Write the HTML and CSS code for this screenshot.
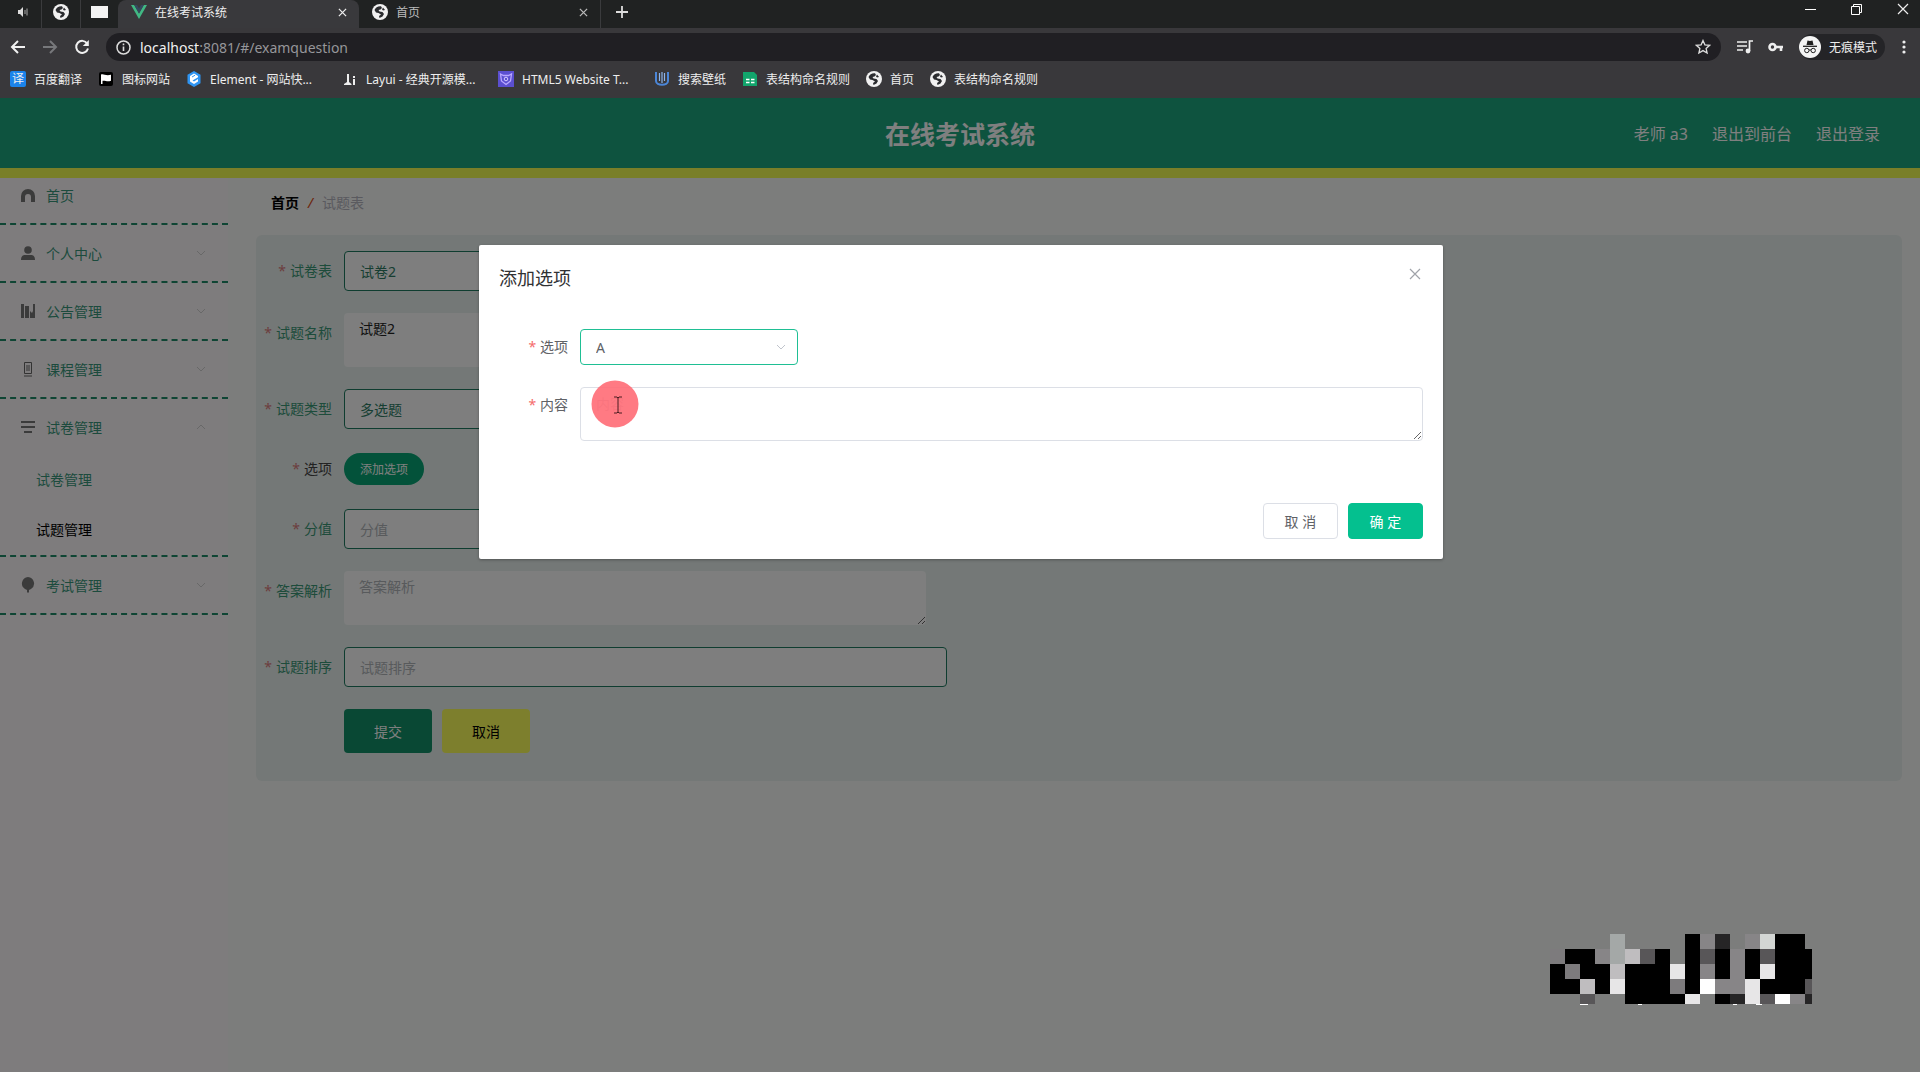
FILE: index.html
```html
<!DOCTYPE html>
<html lang="zh-CN">
  <head>
    <meta charset="UTF-8" />
    <meta name="viewport" content="width=device-width, initial-scale=1.0" />
    <title>在线考试系统</title>
    <link rel="stylesheet" href="styles.css">
  </head>
  <body>
    <svg class="defs" width="0" height="0" aria-hidden="true">
      <symbol id="globe" viewBox="0 0 16 16">
        <circle cx="8" cy="8" r="8" fill="#f1f1f1"/>
        <path d="M2.500 6C3.500 3.500 6 2 9 2.300L10 4 8.500 5.500 6.500 6l1 1.500 3 .5 1.500 2-1.500 2.500-3 1.500L7 12l2-1.500L6.500 9 4 8.500z" fill="#2b2c2f"/>
        <path d="M11 3.500l2 2.500-2 .5-1-1z" fill="#2b2c2f"/>
      </symbol>
      <symbol id="close" viewBox="0 0 10 10">
        <path d="M1 1l8 8M9 1L1 9" fill="none" stroke="currentColor" stroke-width="1.4"/>
      </symbol>
      <symbol id="thin-close" viewBox="0 0 12 12">
        <path d="M1 1l10 10M11 1L1 11" fill="none" stroke="currentColor" stroke-width="1.2"/>
      </symbol>
      <symbol id="up" viewBox="0 0 12 12">
        <path d="M2 8l4-4 4 4" fill="none" stroke="currentColor"/>
      </symbol>
      <symbol id="down" viewBox="0 0 12 12">
        <path d="M2 4l4 4 4-4" fill="none" stroke="currentColor"/>
      </symbol>
    </svg>

    <!-- browser bar -->
    <header class="browser">
      <div class="tabs">
        <div class="pin wide"><svg width="12" height="10" viewBox="0 0 12 10"><path d="M0 3h2l3-3v10L2 7H0z" fill="#ddd"/><path d="M7 3v4M9 1.500v7" stroke="#aaa"/></svg></div>
        <div class="pin"><svg width="16" height="16"><use href="#globe"/></svg></div>
        <div class="pin last"><svg width="17" height="12"><rect width="17" height="12" fill="#f3f3f3"/></svg></div>
        <div class="tab active">
          <svg width="16" height="16" viewBox="0 0 16 16"><path d="M0 1h3.200L8 9.500 12.800 1H16L8 15z" fill="#41b883"/><path d="M3.200 1H6l2 3.500L10 1h2.800L8 9.500z" fill="#35495e"/></svg>
          <span>在线考试系统</span>
          <button class="tab-close" aria-label="关闭"><svg width="9" height="9"><use href="#close"/></svg></button>
        </div>
        <div class="tab">
          <svg width="16" height="16"><use href="#globe"/></svg>
          <span>首页</span>
          <button class="tab-close" aria-label="关闭"><svg width="9" height="9"><use href="#close"/></svg></button>
        </div>
        <button class="new-tab" aria-label="新标签页"><svg width="12" height="12" viewBox="0 0 12 12"><path d="M6 0v12M0 6h12" stroke="#ddd" stroke-width="1.800"/></svg></button>
        <div class="window-btns">
          <button aria-label="最小化"><svg width="11" height="11" viewBox="0 0 11 11"><path d="M0 5.500h11" stroke="#fff"/></svg></button>
          <button aria-label="还原"><svg width="11" height="11" viewBox="0 0 11 11"><path d="M.5 2.500h8v8h-8zM2.500 2.500v-2h8v8h-2" fill="none" stroke="#fff"/></svg></button>
          <button aria-label="关闭窗口"><svg width="12" height="12"><use href="#thin-close"/></svg></button>
        </div>
      </div>

      <div class="toolbar">
        <button aria-label="后退"><svg width="16" height="16" viewBox="0 0 16 16"><path d="M15 8H2M8 2L2 8l6 6" fill="none" stroke="#f1f1f1" stroke-width="2"/></svg></button>
        <button aria-label="前进"><svg width="16" height="16" viewBox="0 0 16 16"><path d="M1 8h13M8 2l6 6-6 6" fill="none" stroke="#77787b" stroke-width="2"/></svg></button>
        <button aria-label="刷新"><svg width="16" height="16" viewBox="0 0 16 16"><path d="M13.200 4.500A6 6 0 1 0 14 9.500" fill="none" stroke="#f1f1f1" stroke-width="2"/><path d="M14.800 1v6H8.800z" fill="#f1f1f1"/></svg></button>
        <div class="address">
          <svg width="15" height="15" viewBox="0 0 15 15"><circle cx="7.500" cy="7.500" r="6.500" fill="none" stroke="#ddd" stroke-width="1.500"/><path d="M7.500 6.500v4.500M7.500 3.500v1.700" stroke="#ddd" stroke-width="1.600"/></svg>
          <span class="url"><b>localhost</b>:8081/#/examquestion</span>
          <svg width="16" height="16" viewBox="0 0 16 16"><path d="M8 1.500l1.900 4.300 4.700.5-3.500 3.100 1 4.600L8 11.600 3.900 14l1-4.600L1.400 6.300l4.700-.5z" fill="none" stroke="#ddd" stroke-width="1.300"/></svg>
        </div>
        <div class="tools">
          <button aria-label="媒体控制"><svg width="16" height="14" viewBox="0 0 16 14"><path d="M0 2h10M0 6h10M0 10h6" stroke="#eee" stroke-width="1.700"/><path d="M12.500 11V1H16" fill="none" stroke="#eee" stroke-width="1.700"/><circle cx="11" cy="11" r="2.400" fill="#eee"/></svg></button>
          <button aria-label="密码"><svg width="16" height="12" viewBox="0 0 16 12"><circle cx="4.500" cy="6" r="3" fill="none" stroke="#eee" stroke-width="2.600"/><path d="M8 6h7M13 6v4" stroke="#eee" stroke-width="2.600"/></svg></button>
          <div class="incognito">
            <svg width="22" height="22" viewBox="0 0 22 22"><circle cx="11" cy="11" r="11" fill="#f5f5f5"/><path d="M7.500 9L8.500 4.500l2.500.6 2.500-.6 1 4.500z" fill="#222"/><path d="M4 10.300h14" stroke="#222" stroke-width="1.300"/><circle cx="7.800" cy="14.500" r="2.200" fill="none" stroke="#222"/><circle cx="14.200" cy="14.500" r="2.200" fill="none" stroke="#222"/><path d="M10 14h2" stroke="#222"/></svg>
            <span>无痕模式</span>
          </div>
          <button class="more" aria-label="菜单"><svg width="4" height="14" viewBox="0 0 4 14"><g fill="#eee"><circle cx="2" cy="2" r="1.600"/><circle cx="2" cy="7" r="1.600"/><circle cx="2" cy="12" r="1.600"/></g></svg></button>
        </div>
      </div>

      <nav class="bookmarks">
        <a href="#"><span class="fanyi">译</span>百度翻译</a>
        <a href="#"><svg width="16" height="16" viewBox="0 0 16 16"><rect x="1" y="1" width="14" height="14" rx="2" fill="#000"/><path d="M3 3.500c3-1 4 1.500 10 .3v6c-4 1.500-5.500-.6-8.500 0V13H3z" fill="#fff"/></svg>图标网站</a>
        <a href="#"><svg width="16" height="16" viewBox="0 0 16 16"><path d="M8 0l6.500 3.800v8.400L8 16l-6.500-3.800V3.800z" fill="#2f95f3"/><path d="M8 2.500L4 5v5.500L8 13l4-2.500V8L8 10.500 6.500 9.500 12 6.200V5z" fill="#fff"/><path d="M6 6l3-1.800" stroke="#2f95f3"/></svg><span class="long">Element - 网站快...</span></a>
        <a href="#"><svg width="16" height="16" viewBox="0 0 16 16"><path d="M5 3h2v8l2.500 2v1H2v-1l3-2zM11 8h2v6h-2zM11 5h2v2h-2z" fill="#eee"/></svg><span class="long">Layui - 经典开源模...</span></a>
        <a href="#"><svg width="16" height="16" viewBox="0 0 16 16"><rect width="16" height="16" fill="#5b4fd0"/><path d="M2.500 3l3 1.500h5l3-1.500-1 7L8 13.500 3.500 10z" fill="none" stroke="#b9a8ff" stroke-width="1.300"/><circle cx="8" cy="8" r="1.800" fill="none" stroke="#d8ccff"/></svg><span class="long">HTML5 Website T...</span></a>
        <a href="#"><svg width="16" height="16" viewBox="0 0 16 16"><path d="M2 1v9c0 5 12 5 12 0V1" fill="none" stroke="#4b86d8" stroke-width="2"/><path d="M5.500 2v8M8 1v11M10.500 2v8" stroke="#8db4ea" stroke-width="1.200"/></svg>搜索壁纸</a>
        <a href="#"><svg width="16" height="16" viewBox="0 0 16 16"><path d="M1 1h11l3 3v11H1z" fill="#12a56c"/><path d="M4 8.500h3.500M9 8.500h3.500M4 11.500h3.500M9 11.500h3.500" stroke="#fff" stroke-width="1.500"/></svg>表结构命名规则</a>
        <a href="#"><svg width="16" height="16"><use href="#globe"/></svg>首页</a>
        <a href="#"><svg width="16" height="16"><use href="#globe"/></svg>表结构命名规则</a>
      </nav>
    </header>

    <div class="app">
      <header class="top">
        <h1>在线考试系统</h1>
        <div class="user">
          <span>老师 a3</span>
          <a href="#">退出到前台</a>
          <a href="#">退出登录</a>
        </div>
      </header>

      <div class="body">
        <ul class="menu">
          <li><a href="#"><svg width="14" height="14" viewBox="0 0 14 14"><path d="M0 14V8a7 7 0 0 1 14 0v6h-4V9a3 3 0 0 0-6 0v5z"/></svg>首页</a></li>
          <li><a href="#"><svg width="14" height="14" viewBox="0 0 14 14"><circle cx="7" cy="4" r="3.800"/><path d="M0 14c0-4 2-5 4-5h6c2 0 4 1 4 5z"/></svg>个人中心<svg class="arrow" width="12" height="12"><use href="#down"/></svg></a></li>
          <li><a href="#"><svg width="14" height="14" viewBox="0 0 14 14"><path d="M0 0h3v14H0zM4 2h4v12H4zM9 7l2 2 1-2V0h2v14H9z"/></svg>公告管理<svg class="arrow" width="12" height="12"><use href="#down"/></svg></a></li>
          <li><a href="#"><svg width="14" height="16" viewBox="0 0 14 16"><path d="M3.500 1.500h7v11h-7zM3 15h8M6 4v6M8 4v6" fill="none" stroke="#666"/></svg>课程管理<svg class="arrow" width="12" height="12"><use href="#down"/></svg></a></li>
          <li>
            <a href="#"><svg width="14" height="14" viewBox="0 0 14 14"><path d="M0 1h14v2H0zM0 6h14v2H0zM3 11h8v2H3z"/></svg>试卷管理<svg class="arrow" width="12" height="12"><use href="#up"/></svg></a>
            <ul class="sub">
              <li><a href="#">试卷管理</a></li>
              <li><a href="#" class="current">试题管理</a></li>
            </ul>
          </li>
          <li><a href="#"><svg width="14" height="16" viewBox="0 0 14 16"><path d="M7 0a6.500 6.500 0 0 1 3 12l-2 1v2.500H6V13l-2-1A6.500 6.500 0 0 1 7 0z"/></svg>考试管理<svg class="arrow" width="12" height="12"><use href="#down"/></svg></a></li>
        </ul>

        <main class="content">
          <div class="crumb"><a href="#">首页</a><i>/</i><span>试题表</span></div>
          <form class="panel">
            <div class="row">
              <label class="required" for="paper">试卷表</label>
              <select id="paper"><option>试卷2</option></select>
            </div>
            <div class="row">
              <label class="required" for="name">试题名称</label>
              <textarea id="name">试题2</textarea>
            </div>
            <div class="row">
              <label class="required" for="type">试题类型</label>
              <select id="type"><option>多选题</option></select>
            </div>
            <div class="row options">
              <label class="required" for="addOption">选项</label>
              <button type="button" id="addOption">添加选项</button>
            </div>
            <div class="row">
              <label class="required" for="score">分值</label>
              <input type="text" id="score" placeholder="分值" />
            </div>
            <div class="row">
              <label class="required" for="analysis">答案解析</label>
              <textarea id="analysis" placeholder="答案解析"></textarea>
            </div>
            <div class="row">
              <label class="required" for="sort">试题排序</label>
              <input type="text" id="sort" placeholder="试题排序" />
            </div>
            <div class="actions">
              <button type="button" class="submit">提交</button>
              <button type="button" class="cancel">取消</button>
            </div>
          </form>
        </main>
      </div>

      <div class="mask">
        <form class="dialog" role="dialog" aria-labelledby="dialogTitle">
          <div class="dialog-head">
            <h2 id="dialogTitle">添加选项</h2>
            <button type="button" class="dialog-close" aria-label="关闭"><svg width="12" height="12"><use href="#thin-close"/></svg></button>
          </div>
          <div class="row">
            <label class="required" for="code">选项</label>
            <div class="select">
              <select id="code"><option>A</option></select>
              <svg class="arrow" width="12" height="12"><use href="#down"/></svg>
            </div>
          </div>
          <div class="row">
            <label class="required" for="text">内容</label>
            <div class="text-box">
              <textarea id="text" placeholder="内容"></textarea>
              <svg class="pointer" width="48" height="48" viewBox="0 0 48 48"><circle cx="24" cy="24" r="23.500" fill="#ff6b75" fill-opacity=".9"/><path d="M23 17h3l1 1 1-1h3M23 33h3l1-1 1 1h3M27 18v14" fill="none" stroke="#4a1c20"/></svg>
            </div>
          </div>
          <div class="dialog-foot">
            <button type="button">取 消</button>
            <button type="button" class="primary">确 定</button>
          </div>
        </form>
      </div>

      <svg class="watermark" width="262" height="71" viewBox="0 0 262 71" shape-rendering="crispEdges">
        <path d="M135 0h15v60h-15zM225 0h30v60h-30zM15 15h30v15h-30zM105 15h15v15h-15zM165 15h15v30h-15zM195 15h15v30h-15zM255 15h7v30h-7zM0 30h15v30H0zM30 30h30v15h-30zM75 30h45v40H75zM15 45h15v15h-15zM45 45h15v15h-15zM210 45h15v15h-15zM120 60h15v10h-15zM165 60h15v10h-15z"/>
        <path d="M60 0h15v30H60z" fill="#a4a8a7"/>
        <path d="M150 0h15v15h-15zM195 0h15v15h-15zM45 15h15v15h-15zM180 15h15v45h-15zM150 30h15v15h-15zM165 45h15v15h-15zM240 60h15v10h-15z" fill="#878587"/>
        <path d="M0 15h15v15H0zM15 30h15v15h-15zM120 45h15v15h-15z" fill="#7d7b7d"/>
        <path d="M165 0h15v15h-15zM180 60h15v10h-15zM255 60h7v10h-7z" fill="#262526"/>
        <path d="M90 15h15v15H90zM150 15h15v15h-15zM210 15h15v15h-15zM30 60h15v10h-15zM210 60h15v10h-15zM255 45h7v15h-7z" fill="#585658"/>
        <path d="M75 15h15v15H75zM60 30h15v15H60zM30 45h15v15h-15z" fill="#bfbdbf"/>
        <path d="M210 0h15v15h-15z" fill="#d3d6d4"/>
        <path d="M120 30h15v15h-15zM60 45h15v15H60zM195 45h15v25h-15zM135 60h15v10h-15zM210 30h15v15h-15z" fill="#e7e6e7"/>
        <path d="M150 45h15v15h-15zM225 60h15v10h-15zM30 70h8v1h-8zM88 70h4v1h-4zM183 70h4v1h-4zM206 70h6v1h-6z" fill="#fff"/>
      </svg>
    </div>
  </body>
</html>
```

FILE: styles.css
```css
* {
  box-sizing: border-box;
}
body {
  margin: 0;
  min-height: 100vh;
  display: flex;
  flex-direction: column;
  font-family: "Noto Sans", "Noto Sans CJK SC", sans-serif;
  font-size: 14px;
  overflow: hidden;
}
h1, h2, ul {
  margin: 0;
  padding: 0;
  list-style: none;
}
a {
  color: inherit;
  text-decoration: none;
}
button, input, select, textarea {
  font-family: inherit;
  font-size: 14px;
}
button {
  padding: 0;
  border: none;
  background: none;
  color: inherit;
  cursor: pointer;
}
svg {
  flex-shrink: 0;
}
.defs {
  position: absolute;
}

/* browser bar */
.browser {
  background: #39383b;
  color: #eee;
  font-size: 12px;
}
.tabs {
  display: flex;
  height: 28px;
  background: #202222;
}
.pin {
  display: flex;
  align-items: center;
  justify-content: center;
  width: 39px;
  padding-bottom: 4px;
  border-right: 1px solid #3a3b3d;
}
.pin.wide {
  width: 42px;
  padding-left: 6px;
}
.pin.last {
  width: 37px;
  border: none;
}
.tab {
  display: flex;
  align-items: center;
  gap: 8px;
  width: 241px;
  padding: 0 12px 4px 13px;
  color: #bbb;
}
.tab.active {
  background: #39393c;
  border-radius: 8px 8px 0 0;
  color: #eee;
}
.tab-close {
  display: flex;
  margin-left: auto;
}
.new-tab {
  padding: 0 15px 4px;
  border-left: 1px solid #3a3b3d;
}
.window-btns {
  display: flex;
  gap: 35px;
  margin-left: auto;
  padding: 0 11px 10px 0;
}
.window-btns button {
  display: flex;
  align-items: center;
}
.toolbar {
  display: flex;
  align-items: center;
  gap: 16px;
  height: 38px;
  padding: 0 14px 0 10px;
}
.toolbar button {
  display: flex;
}
.address {
  flex: 1;
  display: flex;
  align-items: center;
  gap: 9px;
  height: 28px;
  padding: 0 10px;
  border-radius: 14px;
  background: #201f23;
}
.url {
  flex: 1;
  font-size: 14px;
  color: #96969a;
}
.url b {
  font-weight: normal;
  color: #f1f1f1;
}
.tools {
  display: flex;
  align-items: center;
  gap: 15px;
}
.incognito {
  display: flex;
  align-items: center;
  gap: 8px;
  height: 26px;
  padding-right: 8px;
  border-radius: 13px;
  background: #242427;
}
.more {
  padding-left: 2px;
}
.bookmarks {
  display: flex;
  gap: 16px;
  height: 32px;
  padding: 0 10px 6px;
}
.bookmarks a {
  display: flex;
  align-items: center;
  gap: 8px;
  white-space: nowrap;
}
.bookmarks .long {
  width: 116px;
}
.fanyi {
  width: 16px;
  border-radius: 2px;
  background: #1b83ea;
  font-size: 12px;
  line-height: 16px;
  text-align: center;
}

/* page */
.app {
  position: relative;
  flex: 1;
  display: flex;
  flex-direction: column;
  background: #f9faf9;
}
.top {
  display: grid;
  grid-template-columns: 1fr auto 1fr;
  align-items: center;
  height: 80px;
  padding: 0 40px;
  border-bottom: 10px solid #f2ff50;
  background: #1ca67e;
  color: #fff;
  z-index: 1;
}
.top h1 {
  grid-column: 2;
  font-size: 25px;
}
.user {
  display: flex;
  justify-content: flex-end;
  gap: 24px;
  font-size: 16px;
}
.body {
  flex: 1;
  display: flex;
}
.menu {
  width: 228px;
  margin-top: -11px;
  background: #fdf9fa;
  color: #38977a;
}
.menu > li {
  border-bottom: 2px dashed #1f8a68;
}
.menu > li > a {
  display: flex;
  align-items: center;
  gap: 11px;
  height: 56px;
  padding: 0 21px;
}
.menu svg {
  fill: #777;
}
.menu .arrow {
  margin-left: auto;
  color: #d0d0d0;
}
.sub a {
  display: block;
  padding-left: 36px;
  line-height: 50px;
}
.sub .current {
  color: #000;
}
.content {
  flex: 1;
  padding: 0 18px 0 28px;
}
.crumb {
  display: flex;
  gap: 9px;
  padding: 15px;
  line-height: 20px;
  color: #b4b4be;
}
.crumb a {
  font-weight: bold;
  color: #000;
}
.crumb i {
  color: #d9480f;
}
.panel {
  margin-top: 7px;
  padding: 16px 0 28px;
  border-radius: 6px;
  background: #e9f0ee;
}
.row {
  display: flex;
  gap: 12px;
  margin-bottom: 22px;
}
.row label {
  width: 76px;
  line-height: 40px;
  text-align: right;
  white-space: nowrap;
  color: #3a9876;
}
.required::before {
  content: "*";
  margin-right: 4px;
  color: #f56c6c;
}
.panel .required::before {
  color: #d87c7c;
}
input, select, textarea {
  display: block;
  margin: 0;
  padding: 0 15px;
  border-radius: 4px;
  appearance: none;
  outline: none;
}
::placeholder {
  color: #c0c4cc;
}
.panel input, .panel select {
  width: 603px;
  height: 40px;
  border: 1px solid #1f7a60;
  background: #fcfdfd;
  color: #2f7d65;
}
textarea {
  height: 54px;
  padding: 5px 15px;
  line-height: 21px;
}
.panel textarea {
  width: 582px;
  border: none;
  background: #fcfdfd;
  color: #222;
}
.panel .options {
  align-items: center;
  height: 36px;
}
.options label {
  color: #444;
}
.options button {
  height: 32px;
  padding: 0 16px;
  border-radius: 16px;
  background: #07a574;
  color: #fff;
  font-size: 12px;
}
.panel ::placeholder {
  color: #b0b4b8;
}
.actions {
  display: flex;
  gap: 10px;
  padding-left: 88px;
}
.actions button {
  width: 88px;
  height: 44px;
  border-radius: 4px;
}
.submit {
  background: #129068;
  color: #fff;
}
.cancel {
  background: #fbff5a;
  color: #000;
}

/* dialog */
.mask {
  position: absolute;
  inset: 0;
  z-index: 2;
  padding: 147px 0 0 2px;
  background: rgba(0, 0, 0, 0.5);
}
.dialog {
  width: 50.25%;
  margin: 0 auto;
  padding: 20px;
  border-radius: 2px;
  background: #fff;
  box-shadow: 0 1px 3px rgba(0, 0, 0, 0.3);
  color: #606266;
}
.dialog-head {
  display: flex;
  justify-content: space-between;
  align-items: center;
  margin-bottom: 38px;
}
.dialog h2 {
  font-size: 18px;
  font-weight: normal;
  line-height: 26px;
  color: #303133;
}
.dialog-close {
  display: flex;
  margin: 0 2px 8px 0;
  color: #a0a3a9;
}
.dialog .row label {
  width: 69px;
  line-height: 36px;
  color: #606266;
}
.select {
  position: relative;
}
.dialog select {
  width: 218px;
  height: 36px;
  border: 1px solid #1fbf94;
  background: #fff;
  color: #606266;
}
.select .arrow {
  position: absolute;
  top: 12px;
  right: 11px;
  color: #c0c4cc;
}
.text-box {
  position: relative;
  flex: 1;
}
.dialog textarea {
  width: 100%;
  border: 1px solid #dcdfe6;
  background: #fff;
}
.pointer {
  position: absolute;
  top: -7px;
  left: 11px;
}
.dialog-foot {
  display: flex;
  justify-content: flex-end;
  gap: 10px;
  padding-top: 40px;
}
.dialog-foot button {
  width: 75px;
  height: 36px;
  border: 1px solid #dcdfe6;
  border-radius: 4px;
}
.dialog-foot .primary {
  border-color: #04c08f;
  background: #04c08f;
  color: #fff;
}
.watermark {
  position: absolute;
  right: 108px;
  bottom: 67px;
  z-index: 3;
}
```
